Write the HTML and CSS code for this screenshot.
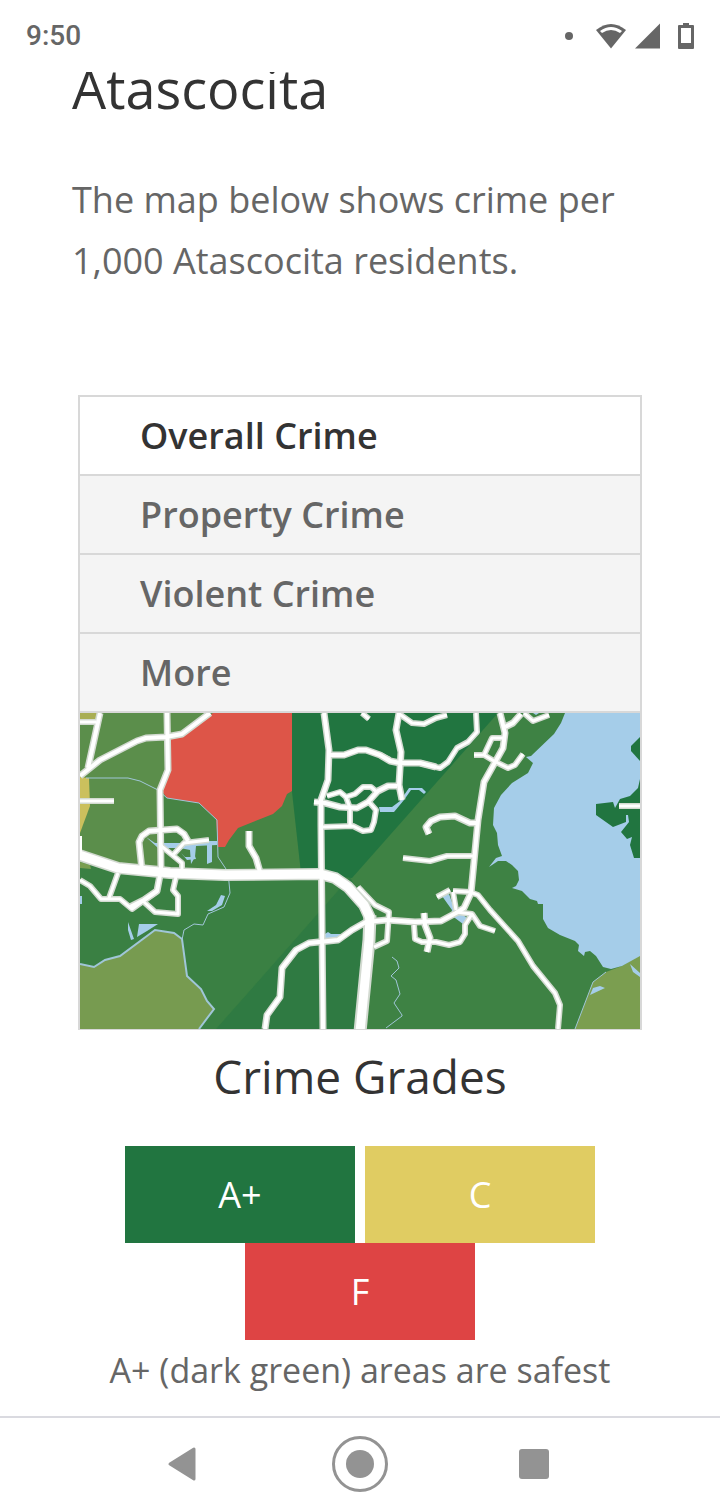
FILE: index.html
```html
<!DOCTYPE html>
<html lang="en">
<head>
    <meta charset="UTF-8">
    <meta name="viewport" content="width=device-width, initial-scale=1.0">
    <title>Atascocita Crime Map</title>
    <link rel="stylesheet" href="styles.css">
</head>
<body>
    <header class="status-bar">
        <span class="clock">9:50</span>
        <svg class="status-icons" width="129" height="28" viewBox="0 0 129 28" fill="#666" aria-hidden="true">
            <circle cx="4" cy="14" r="4"/>
            <path d="M31 8Q46-4 61 8L46 26.500Z"/>
            <path d="M35 9Q46 1 57 9L55 11Q46 5 37 11Z" fill="#fff"/>
            <path d="M70 26.500L95 1.500V26.500Z"/>
            <path d="M118 1h6v2h4a1 1 0 0 1 1 1v22a1 1 0 0 1-1 1h-14a1 1 0 0 1-1-1V4a1 1 0 0 1 1-1h4Z"/>
            <path d="M116 6h10v15h-10Z" fill="#fff"/>
        </svg>
    </header>

    <main class="content">
        <h1>Atascocita</h1>
        <p class="intro">The map below shows crime per 1,000 Atascocita residents.</p>

        <section class="map-box">
            <nav class="tabs">
                <button class="tab active">Overall Crime</button>
                <button class="tab">Property Crime</button>
                <button class="tab">Violent Crime</button>
                <button class="tab">More</button>
            </nav>
            <svg class="map" viewBox="80 713 560 316" role="img" aria-label="Crime map of Atascocita">
                <!-- Areas -->
                <path fill="#3e8244" d="M80 713H640V1029H80Z"/>
                <path fill="#3a8043" d="M80 840L330 873L356 870L216 1029H80Z"/>
                <path fill="#2f7a42" d="M350 877L216 1029H362L373 920Z"/>
                <path fill="#5b8e4b" d="M80 713H215L167 798L161 873L80 857Z"/>
                <path fill="#468444" d="M161 790L292 780L301 873H161Z"/>
                <path fill="#217540" d="M292 713H498L352 878L301 873L292 792Z"/>
                <path fill="#a9ae54" d="M80 713H98L96 721H80Z"/>
                <path fill="#cbc05d" d="M80 777L89 778L90 806L80 833Z"/>
                <path fill="#3a8043" d="M80 861L118 872L161 876V890H80Z"/>
                <path fill="#7a9e50" d="M80 862l10 3 1 4-11-1Z"/>
                <path fill="#dd5548" d="M213 713L182 736L168 738L168 770L161 790L167 798L199 803L216 819L218 847H225L229 840L238 828L273 814L282 806L287 794L292 791V713Z"/>
                <path fill="#779b50" d="M80 964L94 967L105 960L120 956L155 930L174 933L182 939L187 976L201 989L207 1001L214 1009L199 1029H80Z"/>
                <path fill="#7b9e50" d="M640 955L622 966L606 972L593 982L575 1029H640Z"/>

                <!-- Water -->
                <g fill="#a5cde9">
                    <path d="M565 713L561 723L554 734L531 756L526 757L533 763L528 773L512 783L501 795L494 808L493 825L497 833L498 845L502 856L496 858L489 867L498 861L506 861L512 865L518 871L519 880L516 886L512 888L522 891L530 899L537 901L538 904L543 904V919L548 928L560 935L575 941L579 945L578 951L584 956L585 952L590 951L596 956L603 967L611 969L622 966L640 956V713Z"/>
                    <path d="M146 837L155 843H217V845L196 846L195 857L191 864L190 850L180 848L158 848Z"/>
                    <path d="M207 841H217V845H212L212 862L207 864ZM192 847L196 859L187 860L181 853L185 857H192Z"/>
                    <path d="M379 807H392L400 801L409 788H422L426 792L424 794L419 790H411L404 800L394 812H380Z"/>
                    <path d="M128 922L134 939L131 940L128 930ZM139 924H158L147 931L137 937ZM207 911L216 905L221 895L225 896L222 905L212 911Z"/>
                    <path d="M80 896h2v8h-2ZM325 934l3-2 3 2h12l-8 6h-10Z"/>
                    <path d="M442 896l7-2 5 14 13 10-4 6-12-9 1-5Z"/>
                    <path d="M590 995L593 988L600 986L605 988ZM630 964L640 973V977L633 972ZM533 713h6l-3 2Z"/>
                </g>
                <g class="stream">
                    <path d="M80 964L94 967L105 960L120 956L155 930L174 933L182 939L187 976L201 989L207 1001L214 1009L199 1029" stroke-width="2"/>
                    <path d="M86 778H128L140 781L158 790L167 798L199 803L217 820L218 857L228 872L230 893L224 907L208 914L203 925L194 924L184 930L182 940"/>
                    <path d="M392 957L397 961L399 968L391 976L396 980L400 994L394 1003L402 1015V1016L386 1028"/>
                    <path d="M606 972L593 982L575 1029"/>
                </g>
                <g fill="#217540">
                    <path d="M640 737L631 746V751L640 761Z"/>
                    <path d="M640 779L638 788L630 796L620 799L615 808L613 802L596 804V815L613 827L626 822V815H628L629 822L621 832L627 839L632 837L630 845L634 858H640Z"/>
                </g>

                <!-- Roads: grey casing, then the white surface -->
                <defs>
                    <g id="minor">
                        <path d="M80 722H96M80 801H114M619 806H640M362 713L369 719"/>
                        <path d="M160 845L176 858L182 863V872M172 856L184 843L209 840"/>
                        <path d="M327 796L340 792L346 797L355 794L363 787H371L378 793M346 797L350 808V826M322 827L353 826L363 831L371 830L374 822L376 810L369 802"/>
                        <path d="M398 713L412 723L424 724L436 718L447 715M403 858L430 861L447 856H474"/>
                        <path d="M380 755L390 760M420 763L440 768L448 762L457 748L468 742L477 732L476 713"/>
                        <path d="M474 755H484L492 738H505M484 755L494 761L508 768L515 765L523 754M524 713L533 721L549 715"/>
                        <path d="M80 880L90 886L101 899H120L132 909L157 891M109 898L118 873M144 902L155 912L178 914V896L173 890L176 877"/>
                        <path d="M358 887L375 905L389 912L387 941L374 947"/>
                        <path d="M414 925L415 939L422 942H436L449 945L460 942L465 934V925L472 914M437 897L450 890M453 892L456 910M456 912L472 914L480 926L495 931"/>
                        <path d="M453 891L470 892L478 895L490 910L518 941L533 966L555 993L560 1005L558 1029"/>
                    </g>
                    <g id="road">
                        <path d="M100 713L88 768M80 776L100 760L137 741L146 738L166 737L182 734L210 713M167 713L168 770L160 790L161 872"/>
                        <path d="M142 870L139 842L142 836L149 831L177 829L184 834L188 841M130 907L144 900L157 891L160 875"/>
                        <path d="M324 713L329 750L328 780L321 800V825L323 1029M249 831V846L256 858L260 872"/>
                        <path d="M329 755H344L358 750L366 750L380 755L390 761L400 763H420L436 767"/>
                        <path d="M314 802L325 803L340 807L357 808L368 802L378 791L388 786H397"/>
                        <path d="M399 713L396 730L401 752L399 785L402 800M429 834L426 827L431 821L440 817L455 816L470 823H476"/>
                        <path d="M500 713L505 733L503 748L484 782L478 820L471 893L464 908L456 913L441 921L415 922L387 920L366 922L352 930L338 940L309 943L296 950L282 968L280 997L267 1015L265 1029"/>
                        <path d="M505 727L513 723L521 714M424 913L425 925L430 938L427 952"/>
                    </g>
                    <g id="highway">
                        <path d="M76 854L118 868L170 873L225 875L320 874L335 878L348 887L364 905L370 918"/>
                    </g>
                </defs>
                <use href="#minor" class="casing minor"/>
                <use href="#road" class="casing road"/>
                <use href="#highway" class="casing highway"/>
                <path class="casing freeway" d="M370 915L369 940L360 1032"/>
                <use href="#minor" class="surface minor"/>
                <path class="surface road" d="M80 836V855"/>
                <use href="#road" class="surface road"/>
                <use href="#highway" class="surface highway"/>
                <path class="surface freeway" d="M370 915L369 940L360 1032"/>
            </svg>
        </section>

        <section class="grades">
            <h2>Crime Grades</h2>
            <div class="grade-list">
                <div class="grade grade-a">A+</div>
                <div class="grade grade-c">C</div>
                <div class="grade grade-f">F</div>
            </div>
            <p class="note">A+ (dark green) areas are safest</p>
        </section>
    </main>

    <footer class="nav-bar">
        <button class="nav-btn" aria-label="Back">
            <svg width="56" height="56" viewBox="0 0 56 56"><path d="M14 28L38 13V43Z" fill="#939393" stroke="#939393" stroke-width="3" stroke-linejoin="round"/></svg>
        </button>
        <button class="nav-btn" aria-label="Home">
            <svg width="56" height="56" viewBox="0 0 56 56"><circle cx="28" cy="28" r="26.500" fill="none" stroke="#939393" stroke-width="3"/><circle cx="28" cy="28" r="14" fill="#939393"/></svg>
        </button>
        <button class="nav-btn" aria-label="Recent apps">
            <svg width="56" height="56" viewBox="0 0 56 56"><rect x="11" y="13" width="30" height="30" rx="3" fill="#939393"/></svg>
        </button>
    </footer>
</body>
</html>
```

FILE: styles.css
```css
* {
  box-sizing: border-box;
}

body {
  font-family: 'Open Sans', sans-serif;
  margin: 0;
  min-height: 100vh;
  display: flex;
  flex-direction: column;
  background: #fff;
  color: #666;
  font-size: 36px;
}

h1,
h2 {
  margin: 0;
  color: #333;
  font-weight: 400;
}

/* Status bar */
.status-bar {
  position: sticky;
  top: 0;
  z-index: 1;
  height: 72px;
  padding: 0 26px;
  display: flex;
  justify-content: space-between;
  align-items: center;
  background: #fff;
}

.clock {
  font-family: Roboto, sans-serif;
  font-size: 28px;
  font-weight: 500;
  line-height: 36px;
}

.status-icons {
  overflow: visible;
}

/* Content */
.content {
  flex: 1;
}

h1 {
  margin-top: -22px;
  padding: 0 72px;
  font-size: 54px;
  line-height: 76px;
}

.intro {
  margin: 43px 72px 104px;
  line-height: 61px;
}

.map-box {
  margin: 0 78px;
  border: 2px solid #d8d8d8;
  border-bottom-width: 1px;
}

.tabs {
  display: flex;
  flex-direction: column;
}

.tab {
  height: 79px;
  padding: 0 60px;
  border: 0;
  border-bottom: 2px solid #d8d8d8;
  background: #f4f4f4;
  color: #666;
  font: inherit;
  font-weight: 600;
  text-align: left;
  cursor: pointer;
}

.tab.active {
  background: #fff;
  color: #333;
}

/* Map */
.map {
  display: block;
  width: 100%;
}

.stream {
  fill: none;
  stroke: #a0c6d8;
  stroke-width: 1;
}

.casing,
.surface {
  fill: none;
  stroke-linejoin: round;
}

.casing {
  stroke: #d3dad1;
}

.surface {
  stroke: #fff;
}

.casing.minor {
  stroke-width: 6px;
}

.surface.minor {
  stroke-width: 3px;
}

.casing.road {
  stroke-width: 7px;
}

.surface.road {
  stroke-width: 4px;
}

.casing.highway {
  stroke-width: 12px;
}

.surface.highway {
  stroke-width: 9px;
}

.casing.freeway {
  stroke-width: 13px;
}

.surface.freeway {
  stroke-width: 9px;
}

/* Grades */
.grades {
  text-align: center;
}

h2 {
  margin: 14px 0 38px;
  font-size: 46px;
  line-height: 64px;
}

.grade-list {
  display: flex;
  flex-wrap: wrap;
  justify-content: center;
  column-gap: 10px;
  max-width: 564px;
  margin: 0 auto;
}

.grade {
  width: 230px;
  line-height: 97px;
  color: #fff;
}

.grade-a {
  background: #217540;
}

.grade-c {
  background: #e0cc62;
}

.grade-f {
  background: #de4444;
}

.note {
  margin: 0;
  font-size: 34px;
  line-height: 61px;
}

/* Navigation bar */
.nav-bar {
  height: 96px;
  padding-bottom: 2px;
  display: flex;
  justify-content: center;
  align-items: center;
  gap: 120px;
  border-top: 2px solid #dadae0;
  background: #fff;
}

.nav-btn {
  padding: 0;
  border: 0;
  background: none;
  cursor: pointer;
}

.nav-btn svg {
  display: block;
}
```
